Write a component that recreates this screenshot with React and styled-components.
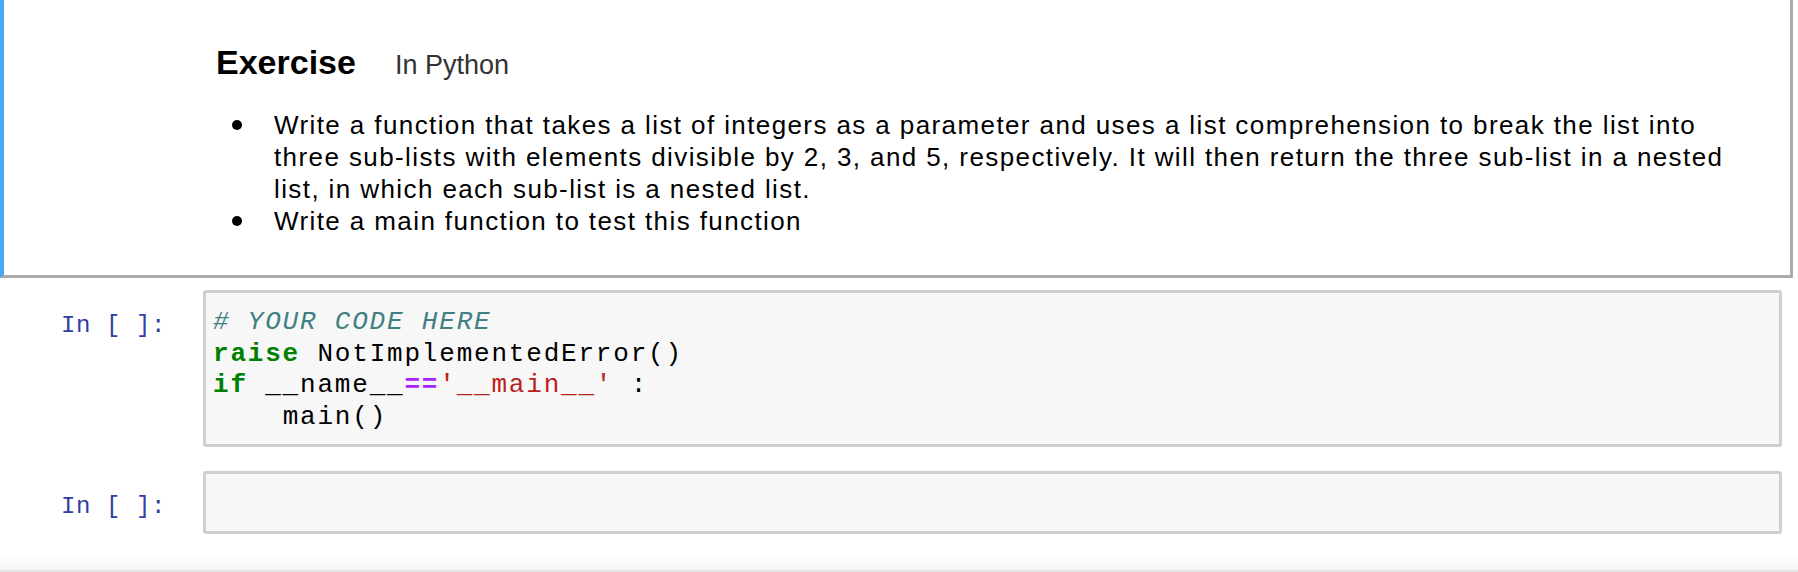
import React from 'react';
import styled, { createGlobalStyle } from 'styled-components';

const GlobalStyle = createGlobalStyle`
  html, body {
    margin: 0;
    padding: 0;
    background: #ffffff;
  }
  body {
    font-family: 'Liberation Sans', Arial, sans-serif;
    color: #000;
  }
`;

const Page = styled.div`
  width: 1798px;
  height: 572px;
  overflow: hidden;
  display: flex;
  flex-direction: column;
`;

const MarkdownCell = styled.div`
  width: 1793px;
  flex-shrink: 0;
  box-sizing: border-box;
  border-left: 4px solid #4aa8f2;
  border-right: 3px solid #ababab;
  border-bottom: 3px solid #ababab;
  background: #ffffff;
  padding: 42px 45px 38px 212px;
`;

const Heading = styled.div`
  display: flex;
  align-items: baseline;
  gap: 39px;
  line-height: 40px;
`;

const Title = styled.span`
  font-size: 34px;
  font-weight: 700;
  color: #000;
`;

const Subtitle = styled.span`
  font-size: 27px;
  color: #333;
`;

const BulletList = styled.ul`
  list-style: none;
  margin: 24px 0 0;
  padding: 0 0 0 16px;
  font-size: 26px;
  letter-spacing: 1.4px;
  line-height: 32px;
`;

const Item = styled.li`
  display: flex;
  align-items: flex-start;
`;

const Bullet = styled.span`
  flex: 0 0 42px;
  height: 32px;
  display: flex;
  align-items: center;

  &::before {
    content: '';
    width: 10px;
    height: 10px;
    border-radius: 50%;
    background: #000;
  }
`;

const ItemText = styled.span`
  flex: 1;
`;

const CodeRow = styled.div`
  display: flex;
  flex-shrink: 0;
  align-items: flex-start;
  margin-top: ${(p) => p.$gap}px;
`;

const Prompt = styled.div`
  flex: 0 0 203px;
  box-sizing: border-box;
  padding: 20px 37px 0 0;
  text-align: right;
  font-family: 'Liberation Mono', 'Courier New', monospace;
  font-size: 24px;
  line-height: 31.5px;
  letter-spacing: 0.6px;
  color: #303f9f;
  white-space: pre;
`;

const InputArea = styled.pre`
  flex: 0 0 1579px;
  box-sizing: border-box;
  margin: 0;
  min-height: ${(p) => p.$minHeight || 0}px;
  padding: 14px 8px 11px 7px;
  background: #f7f7f7;
  border: 3px solid #cfcfcf;
  border-radius: 3px;
  font-family: 'Liberation Mono', 'Courier New', monospace;
  font-size: 26px;
  line-height: 31.5px;
  letter-spacing: 1.8px;
  color: #000;
`;

const Comment = styled.span`
  color: #408080;
  font-style: italic;
`;

const Keyword = styled.span`
  color: #008000;
  font-weight: 700;
`;

const Operator = styled.span`
  color: #aa22ff;
  font-weight: 700;
`;

const Str = styled.span`
  color: #ba2121;
`;

const Footer = styled.div`
  margin-top: 19px;
  height: 17px;
  flex-shrink: 0;
  background: linear-gradient(#ffffff, #f6f6f6);
  border-bottom: 3px solid #e2e2e2;
`;

const items = [
  'Write a function that takes a list of integers as a parameter and uses a list comprehension to break the list into three sub-lists with elements divisible by 2, 3, and 5, respectively. It will then return the three sub-list in a nested list, in which each sub-list is a nested list.',
  'Write a main function to test this function',
];

const App = () => (
  <Page>
    <GlobalStyle />
    <MarkdownCell>
      <Heading>
        <Title>Exercise</Title>
        <Subtitle>In Python</Subtitle>
      </Heading>
      <BulletList>
        {items.map((text) => (
          <Item key={text}>
            <Bullet />
            <ItemText>{text}</ItemText>
          </Item>
        ))}
      </BulletList>
    </MarkdownCell>

    <CodeRow $gap={12}>
      <Prompt>In [ ]:</Prompt>
      <InputArea>
        <Comment># YOUR CODE HERE</Comment>
        {'\n'}
        <Keyword>raise</Keyword> NotImplementedError()
        {'\n'}
        <Keyword>if</Keyword> __name__<Operator>==</Operator>
        <Str>'__main__'</Str> :
        {'\n'}
        {'    '}main()
      </InputArea>
    </CodeRow>

    <CodeRow $gap={24}>
      <Prompt>In [ ]:</Prompt>
      <InputArea $minHeight={62}>{' '}</InputArea>
    </CodeRow>

    <Footer />
  </Page>
);

export default App;
